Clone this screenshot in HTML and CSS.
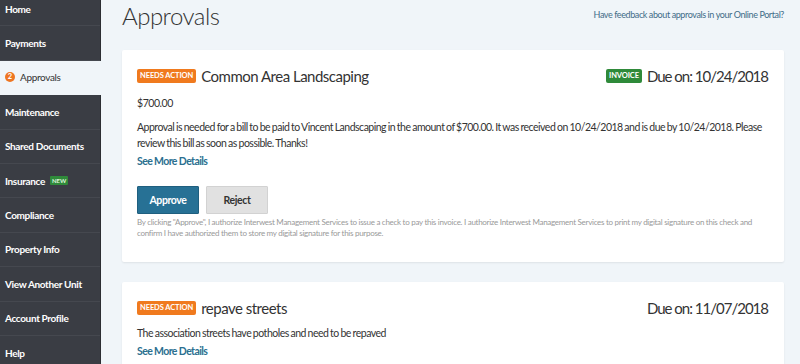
FILE: index.html
```html
<!DOCTYPE html>
<html lang="en">
<head>
  <meta charset="UTF-8">
  <meta name="viewport" content="width=device-width, initial-scale=1.0">
  <title>Approvals</title>
  <link rel="stylesheet" href="styles.css">
</head>
<body>
  <div class="layout">
    <nav class="sidebar">
      <a class="nav-item" href="#">Home</a>
      <a class="nav-item" href="#">Payments</a>
      <a class="nav-item active" href="#"><span class="count">2</span>Approvals</a>
      <a class="nav-item" href="#">Maintenance</a>
      <a class="nav-item" href="#">Shared Documents</a>
      <a class="nav-item" href="#">Insurance <span class="new">NEW</span></a>
      <a class="nav-item" href="#">Compliance</a>
      <a class="nav-item" href="#">Property Info</a>
      <a class="nav-item" href="#">View Another Unit</a>
      <a class="nav-item" href="#">Account Profile</a>
      <a class="nav-item" href="#">Help</a>
    </nav>

    <main class="content">
      <div class="page-head">
        <h1>Approvals</h1>
        <a class="feedback" href="#">Have feedback about approvals in your Online Portal?</a>
      </div>

      <section class="card">
        <div class="card-head">
          <h2><span class="tag tag-action">Needs Action</span>Common Area Landscaping</h2>
          <div class="due"><span class="tag tag-invoice">Invoice</span>Due on: 10/24/2018</div>
        </div>
        <p class="amount">$700.00</p>
        <p class="desc">Approval is needed for a bill to be paid to Vincent Landscaping in the amount of $700.00. It was received on 10/24/2018 and is due by 10/24/2018. Please review this bill as soon as possible. Thanks!</p>
        <a class="details" href="#">See More Details</a>
        <div class="actions">
          <button type="button" class="btn btn-approve">Approve</button>
          <button type="button" class="btn btn-reject">Reject</button>
        </div>
        <p class="legal">By clicking "Approve", I authorize Interwest Management Services to issue a check to pay this invoice. I authorize Interwest Management Services to print my digital signature on this check and confirm I have authorized them to store my digital signature for this purpose.</p>
      </section>

      <section class="card">
        <div class="card-head">
          <h2><span class="tag tag-action">Needs Action</span>repave streets</h2>
          <div class="due">Due on: 11/07/2018</div>
        </div>
        <p class="desc">The association streets have potholes and need to be repaved</p>
        <a class="details" href="#">See More Details</a>
      </section>
    </main>
  </div>
</body>
</html>
```

FILE: styles.css
```css
* {
  box-sizing: border-box;
}

body {
  margin: 0;
  font-family: 'Lato', sans-serif;
  background-color: #f0f5f9;
  color: #333;
  height: 364px;
  overflow: hidden;
}

/* page is scrolled a few pixels down */
.layout {
  display: flex;
  margin-top: -8px;
}

.sidebar {
  width: 101px;
  flex-shrink: 0;
  background-color: #3a3d44;
  border-right: 1px solid #2c2e33;
  min-height: 400px;
}

.nav-item {
  display: flex;
  align-items: center;
  height: 34.4px;
  padding: 0 5px;
  border-bottom: 1px solid #45484f;
  color: #fff;
  font-size: 10px;
  font-weight: 700;
  letter-spacing: -.35px;
  text-decoration: none;
  white-space: nowrap;
}

.nav-item.active {
  background-color: #f0f5f9;
  color: #333;
  font-weight: 400;
  margin-right: -1px;
  border-bottom-color: #f0f5f9;
}

.count {
  display: inline-block;
  width: 10px;
  height: 10px;
  margin-right: 5px;
  border-radius: 50%;
  background-color: #ee7622;
  color: #fff;
  font-size: 7.5px;
  font-weight: 700;
  line-height: 10px;
  letter-spacing: 0;
  text-align: center;
}

.new {
  margin-left: 5px;
  padding: 0 2px;
  background-color: #2f8a3a;
  border-radius: 1px;
  color: #dff3dc;
  font-size: 6px;
  line-height: 9px;
  letter-spacing: 0;
}

.content {
  flex: 1;
  padding: 0 16px 0 21px;
}

.page-head {
  display: flex;
  justify-content: space-between;
  align-items: flex-start;
  height: 58px;
  padding-top: 11px;
}

h1 {
  margin: 0;
  font-size: 24px;
  font-weight: 300;
  line-height: 26px;
  letter-spacing: -.5px;
  color: #333;
}

.feedback {
  margin-top: 5.5px;
  font-size: 9px;
  line-height: 12px;
  letter-spacing: -.4px;
  color: #3f6c88;
  text-decoration: none;
}

.card {
  background-color: #fff;
  border-radius: 2px;
  box-shadow: 0 1px 2px rgba(0, 0, 0, .08);
  padding: 16px 16px 23.5px 15px;
  margin-bottom: 20px;
}

.card-head {
  display: flex;
  justify-content: space-between;
  align-items: center;
  height: 20px;
}

h2, .due {
  display: flex;
  align-items: center;
  margin: 0;
  font-size: 15px;
  font-weight: 400;
  letter-spacing: -.5px;
  color: #333;
}

.due {
  letter-spacing: -1px;
}

.tag {
  margin-right: 5px;
  padding: 0 3px;
  border-radius: 2px;
  color: #fff;
  font-size: 7.5px;
  font-weight: 700;
  line-height: 14px;
  letter-spacing: -.1px;
  text-transform: uppercase;
}

.tag-action {
  background-color: #f07a1e;
}

.tag-invoice {
  background-color: #2f8a3a;
}

.amount {
  margin: 10px 0 0;
  font-size: 10.5px;
  line-height: 14px;
  letter-spacing: -.45px;
}

.desc {
  margin: 9px 0 0;
  font-size: 10.5px;
  line-height: 16px;
  letter-spacing: -.5px;
  word-spacing: -.5px;
}

.card-head + .desc {
  margin-top: 7px;
}

.details {
  display: block;
  margin-top: 3px;
  font-size: 10.5px;
  font-weight: 700;
  line-height: 14px;
  letter-spacing: -.6px;
  color: #2b6f90;
  text-decoration: none;
}

.actions {
  display: flex;
  gap: 7px;
  margin-top: 18px;
}

.btn {
  width: 62px;
  height: 28px;
  font-family: 'Lato', sans-serif;
  font-size: 10.5px;
  font-weight: 700;
  letter-spacing: -.4px;
  border-radius: 1px;
  cursor: pointer;
}

.btn-approve {
  background-color: #277195;
  border: 1px solid #1f5f7f;
  color: #fff;
}

.btn-reject {
  background-color: #e1e1e1;
  border: 1px solid #d2d2d2;
  color: #333;
}

.legal {
  margin: 2.5px 0 0;
  font-size: 8px;
  line-height: 11px;
  letter-spacing: -.28px;
  color: #999;
}
```
